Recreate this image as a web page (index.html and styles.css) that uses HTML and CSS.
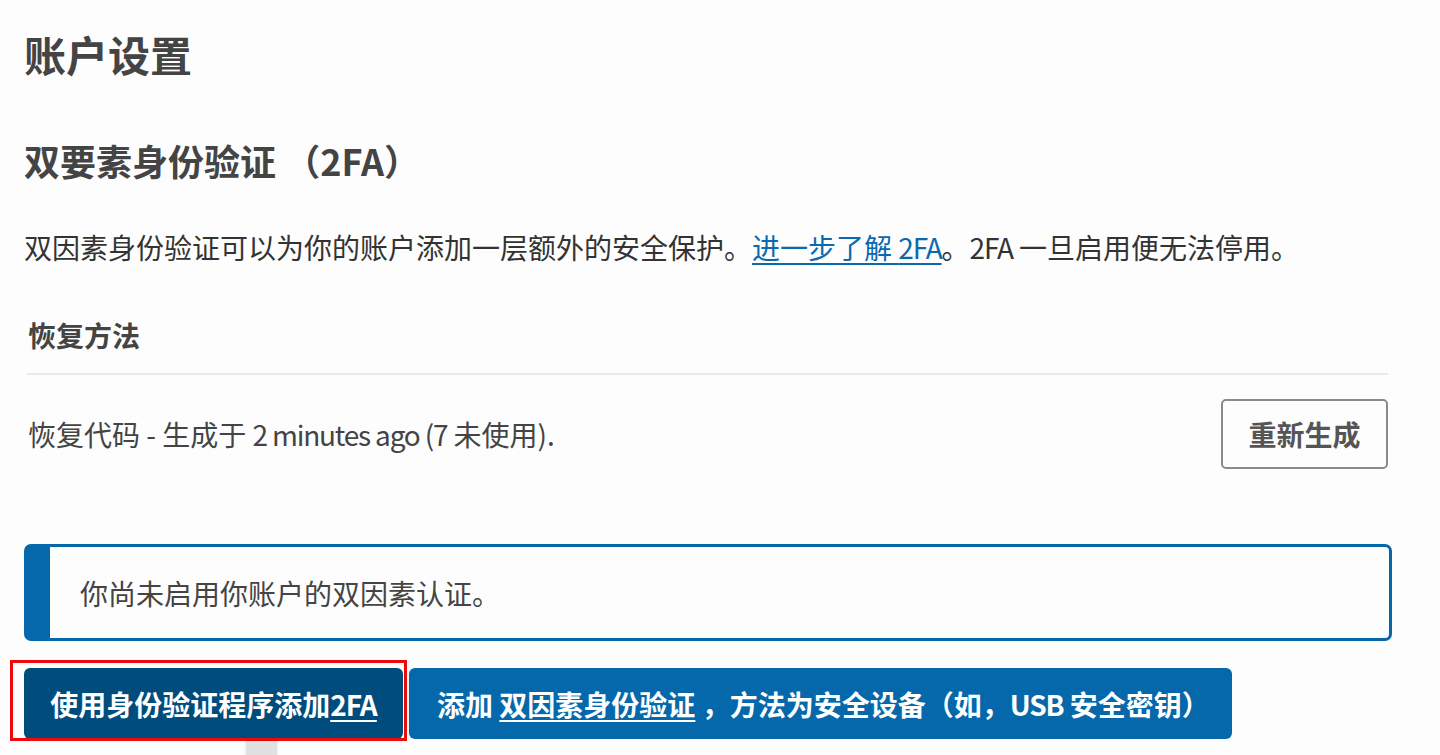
FILE: index.html
```html
<!DOCTYPE html>
<html lang="zh-CN">
<head>
<meta charset="utf-8">
<title>账户设置</title>
<link rel="stylesheet" href="styles.css">
</head>
<body>
<main class="page">
  <h1 class="title">账户设置</h1>
  <h2 class="subtitle">双要素身份验证 （2FA）</h2>
  <p class="intro">双因素身份验证可以为你的账户添加一层额外的安全保护。<a href="#" class="link">进一步了解 <span class="lat">2FA</span></a>。<span class="lat">2FA</span> 一旦启用便无法停用。</p>

  <section class="recovery">
    <div class="recovery-head">恢复方法</div>
    <div class="recovery-row">
      <span class="recovery-text">恢复代码 - 生成于 <span class="lat">2 minutes ago (7</span> 未使用).</span>
      <button class="btn-outline">重新生成</button>
    </div>
  </section>

  <div class="alert">你尚未启用你账户的双因素认证。</div>

  <div class="actions">
    <button class="btn btn-dark">使用身份验证程序添加<u>2FA</u><span class="focus-ring"></span><span class="tip-stem"></span></button>
    <button class="btn btn-blue">添加 <u>双因素身份验证</u> ，方法为安全设备（如，<span class="lat">USB</span> 安全密钥）</button>
  </div>
</main>
</body>
</html>
```

FILE: styles.css
```css
html, body {
  margin: 0;
  padding: 0;
  background: #fdfdfd;
}

body {
  font-family: "Noto Sans CJK SC", "Noto Sans", sans-serif;
  color: #333;
  overflow: hidden;
  height: 755px;
}

.page {
  width: 1368px;
  padding: 0 0 0 24px;
}

.lat {
  letter-spacing: -1.2px;
}

.title {
  margin: 29px 0 0;
  font-size: 42px;
  line-height: 50px;
  font-weight: 700;
  color: #444;
}

.subtitle {
  margin: 59px 0 0;
  font-size: 36px;
  line-height: 44px;
  font-weight: 700;
  color: #444;
}

.intro {
  margin: 45px 0 0;
  font-size: 28px;
  line-height: 40px;
  color: #333;
}

.link {
  color: #0a6aad;
  text-decoration: underline;
  text-underline-offset: 4px;
  text-decoration-thickness: 2px;
}

.recovery {
  margin: 48px 4px 0 3px;
}

.recovery-head {
  font-size: 28px;
  line-height: 40px;
  font-weight: 700;
  color: #444;
  padding: 0 0 18px 1px;
  border-bottom: 2px solid #e9e9e9;
}

.recovery-row {
  display: flex;
  align-items: center;
  justify-content: space-between;
  padding-top: 24px;
}

.recovery-text {
  font-size: 28px;
  line-height: 40px;
  color: #444;
  padding-left: 1px;
}

.btn-outline {
  font-family: inherit;
  font-size: 28px;
  font-weight: 700;
  color: #555;
  background: #fdfdfd;
  border: 2px solid #8a8a8a;
  border-radius: 5px;
  height: 70px;
  width: 167px;
  padding: 0;
}

.alert {
  margin-top: 75px;
  border: 3px solid #0468ab;
  border-left-width: 26px;
  border-radius: 7px;
  background: #fdfdfd;
  padding: 26px 30px 25px;
  font-size: 28px;
  line-height: 40px;
  color: #444;
}

.actions {
  display: flex;
  gap: 6px;
  margin-top: 27px;
}

.btn {
  position: relative;
  font-family: inherit;
  font-size: 28px;
  font-weight: 700;
  color: #fff;
  border: none;
  border-radius: 6px;
  height: 71px;
  white-space: nowrap;
  box-sizing: border-box;
}

.btn u {
  text-underline-offset: 4px;
  text-decoration-thickness: 2px;
}

.btn-dark {
  background: #004d7d;
  width: 379px;
  padding: 0;
  text-align: center;
}

.btn-dark u {
  letter-spacing: -1px;
}

.btn-blue {
  background: #0468ab;
  width: 823px;
  padding: 0 0 0 28px;
  text-align: left;
}

.focus-ring {
  position: absolute;
  left: -14px;
  top: -8px;
  right: -4px;
  bottom: -2px;
  border: 3px solid #ee0a0a;
  pointer-events: none;
}

.tip-stem {
  position: absolute;
  left: 222px;
  top: 73px;
  width: 31px;
  height: 20px;
  background: #e1e1e1;
  box-shadow: 0 0 3px rgba(0, 0, 0, 0.12);
}
```
